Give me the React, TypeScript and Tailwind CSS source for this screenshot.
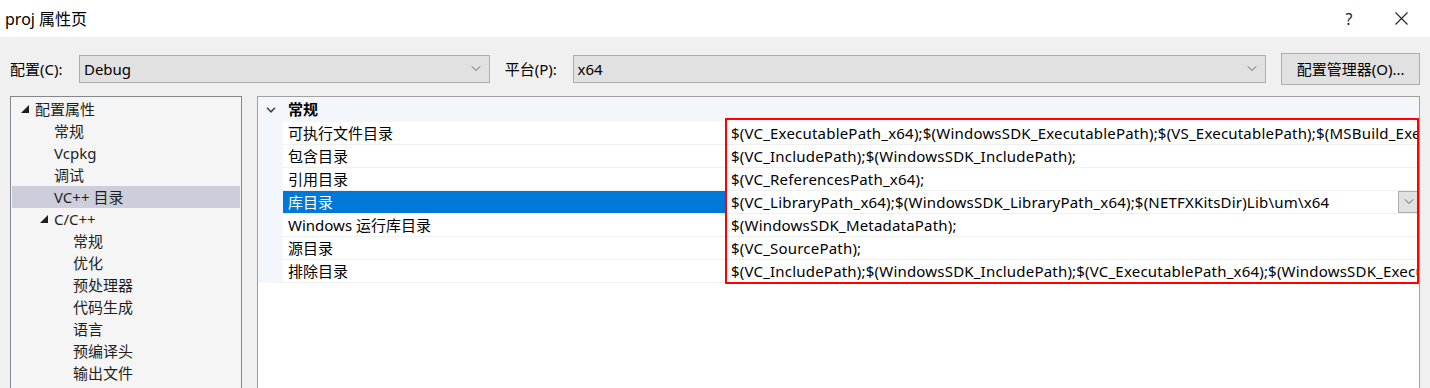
import React from 'react';

const FONT = '"Noto Sans", "Noto Sans CJK SC", sans-serif';

interface TreeItem {
  label: string;
  level: number;
  expanded?: boolean;
  selected?: boolean;
}

interface PropRow {
  name: string;
  value: string;
  selected?: boolean;
}

const treeItems: TreeItem[] = [
  { label: '配置属性', level: 0, expanded: true },
  { label: '常规', level: 1 },
  { label: 'Vcpkg', level: 1 },
  { label: '调试', level: 1 },
  { label: 'VC++ 目录', level: 1, selected: true },
  { label: 'C/C++', level: 1, expanded: true },
  { label: '常规', level: 2 },
  { label: '优化', level: 2 },
  { label: '预处理器', level: 2 },
  { label: '代码生成', level: 2 },
  { label: '语言', level: 2 },
  { label: '预编译头', level: 2 },
  { label: '输出文件', level: 2 },
];

const rows: PropRow[] = [
  { name: '可执行文件目录', value: '$(VC_ExecutablePath_x64);$(WindowsSDK_ExecutablePath);$(VS_ExecutablePath);$(MSBuild_ExecutablePath);$(FxCopDir);$(PATH);' },
  { name: '包含目录', value: '$(VC_IncludePath);$(WindowsSDK_IncludePath);' },
  { name: '引用目录', value: '$(VC_ReferencesPath_x64);' },
  { name: '库目录', value: '$(VC_LibraryPath_x64);$(WindowsSDK_LibraryPath_x64);$(NETFXKitsDir)Lib\\um\\x64', selected: true },
  { name: 'Windows 运行库目录', value: '$(WindowsSDK_MetadataPath);' },
  { name: '源目录', value: '$(VC_SourcePath);' },
  { name: '排除目录', value: '$(VC_IncludePath);$(WindowsSDK_IncludePath);$(VC_ExecutablePath_x64);$(WindowsSDK_ExecutablePath);' },
];

const SmallChevron = () => (
  <svg width="10" height="6" viewBox="0 0 10 6" fill="none" stroke="#606060" strokeWidth="1">
    <path d="M1 0.5 L5 4.5 L9 0.5" />
  </svg>
);

const Triangle = () => (
  <svg width="8" height="8" viewBox="0 0 8 8">
    <polygon points="0,8 8,8 8,0" fill="#1e1e1e" />
  </svg>
);

const Combo = ({ value, className }: { value: string; className: string }) => (
  <div className={`h-[28px] bg-[#e1e1e1] border border-[#adadad] flex items-center justify-between pl-[4px] pr-[8px] text-[15px] text-black ${className}`}>
    <span>{value}</span>
    <SmallChevron />
  </div>
);

export default function App() {
  return (
    <div className="w-[1430px] h-[388px] overflow-hidden flex flex-col bg-[#f0f0f0]" style={{ fontFamily: FONT }}>
      {/* Title bar */}
      <div className="h-[37px] bg-white flex items-center justify-between pl-[5px] shrink-0">
        <span className="text-[16px] text-black">proj 属性页</span>
        <div className="flex items-center h-full">
          <span className="w-[46px] text-center text-[16px] text-[#222]">?</span>
          <div className="w-[58px] flex justify-center">
            <svg width="13" height="13" viewBox="0 0 13 13" stroke="#222" strokeWidth="1.1">
              <path d="M0.5 0.5 L12.5 12.5 M12.5 0.5 L0.5 12.5" />
            </svg>
          </div>
        </div>
      </div>

      {/* Config row */}
      <div className="flex items-center px-[10px] pt-[16px] h-[48px] shrink-0 text-[15px] text-black">
        <span className="w-[69px]">配置(C):</span>
        <Combo value="Debug" className="w-[411px]" />
        <span className="ml-[15px] w-[68px]">平台(P):</span>
        <Combo value="x64" className="w-[694px]" />
        <div className="ml-[15px] w-[139px] h-[32px] bg-[#e1e1e1] border border-[#adadad] flex items-center justify-center">
          配置管理器(O)...
        </div>
      </div>

      {/* Panels */}
      <div className="flex gap-[15px] px-[10px] mt-[11px] flex-1 min-h-0">
        {/* Tree */}
        <div className="w-[232px] border border-[#828790] border-b-0 bg-[#f5f5f5] pt-[1px] text-[15px] text-[#1e1e1e]">
          {treeItems.map((item, i) => (
            <div
              key={i}
              className={`h-[22px] flex items-center mx-[1px] ${item.selected ? 'bg-[#cccedb]' : ''}`}
            >
              <div
                className={`flex items-center ${item.level === 0 ? 'pl-[23px]' : item.level === 1 ? 'pl-[42px]' : 'pl-[61px]'}`}
              >
                {item.expanded ? (
                  <span className="w-[14px] -ml-[14px] flex">
                    <Triangle />
                  </span>
                ) : null}
                <span>{item.label}</span>
              </div>
            </div>
          ))}
        </div>

        {/* Property grid */}
        <div className="relative flex-1 border border-[#a0a0a0] border-b-0 bg-white overflow-hidden text-[15px] text-black">
          <div className="flex h-[25px] bg-[#f3f6fb]">
            <div className="w-[25px] flex items-center justify-center">
              <svg width="10" height="6" viewBox="0 0 10 6" fill="none" stroke="#444" strokeWidth="1.6">
                <path d="M1 0.8 L5 4.8 L9 0.8" />
              </svg>
            </div>
            <div className="flex items-center pl-[5px] font-bold">常规</div>
          </div>
          {rows.map((row) => (
            <div key={row.name} className="flex h-[23px]">
              <div className="w-[25px] shrink-0 bg-[#f3f6fb]" />
              <div
                className={`w-[442px] shrink-0 flex items-center pl-[5px] border-b border-[#f0f0f0] ${row.selected ? 'bg-[#0078d7] text-white border-[#0078d7]' : ''}`}
              >
                {row.name}
              </div>
              <div className="flex-1 min-w-0 flex items-center pl-[5px] border-b border-l border-[#f0f0f0] whitespace-nowrap overflow-hidden relative tracking-[0.2px]">
                <span>{row.value}</span>
                {row.selected ? (
                  <div className="absolute right-0 top-0 w-[21px] h-[22px] bg-[#e1e1e1] border border-[#adadad] flex items-center justify-center">
                    <SmallChevron />
                  </div>
                ) : null}
              </div>
            </div>
          ))}
          {/* annotation box */}
          <div className="absolute left-[467px] top-[21px] w-[694px] h-[166px] border-2 border-[#ff0000] pointer-events-none" />
        </div>
      </div>
    </div>
  );
}
